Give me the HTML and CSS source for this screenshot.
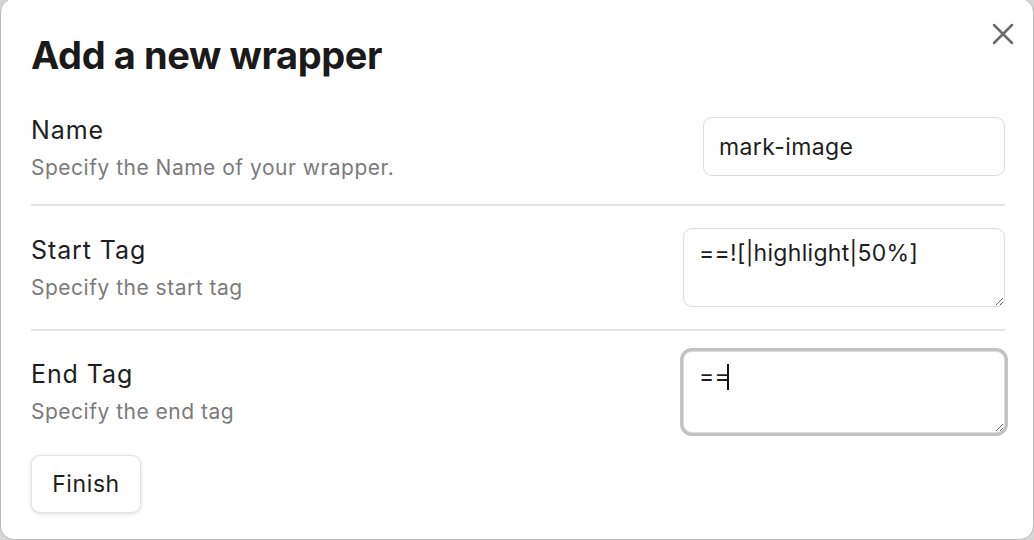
FILE: index.html
```html
<!DOCTYPE html>
<html>
<head>
<meta charset="utf-8">
<link rel="stylesheet" href="styles.css">
</head>
<body>
<div class="modal">
  <button class="close" aria-label="Close">
    <svg width="22" height="22" viewBox="0 0 22 22"><path d="M2 2 L20 20 M20 2 L2 20" stroke="#6b6b6b" stroke-width="2.5" stroke-linecap="round"/></svg>
  </button>
  <h1 class="title">Add a new wrapper</h1>
  <div class="setting first">
    <div class="info">
      <div class="name">Name</div>
      <div class="desc">Specify the Name of your wrapper.</div>
    </div>
    <input class="text-input" type="text" value="mark-image">
  </div>
  <div class="setting bordered">
    <div class="info">
      <div class="name">Start Tag</div>
      <div class="desc">Specify the start tag</div>
    </div>
    <textarea class="area">==![|highlight|50%]</textarea>
  </div>
  <div class="setting bordered last">
    <div class="info">
      <div class="name">End Tag</div>
      <div class="desc">Specify the end tag</div>
    </div>
    <div class="area focused" role="textbox">==<span class="caret"></span></div>
  </div>
  <div class="actions">
    <button class="btn">Finish</button>
  </div>
</div>
</body>
</html>
```
FILE: styles.css
```css
html, body {
  margin: 0;
  padding: 0;
}
body {
  background: #d6d6d6;
  font-family: Inter, "Noto Sans", sans-serif;
  color: #222;
  overflow: hidden;
}
.modal {
  position: relative;
  box-sizing: border-box;
  width: 1034px;
  height: 542px;
  margin-top: -2px;
  background: #fff;
  border: 1px solid #b9b9b9;
  border-radius: 14px;
  padding: 0 28px 0 30px;
}
.close {
  position: absolute;
  top: 24px;
  right: 19px;
  background: none;
  border: 0;
  padding: 0;
  width: 22px;
  height: 22px;
  cursor: pointer;
}
.close svg { display: block; }
.title {
  margin: 0 0 15px;
  padding-top: 34px;
  font-size: 38px;
  line-height: 44px;
  font-weight: 700;
  letter-spacing: -0.4px;
  color: #1a1a1a;
}
.setting {
  display: flex;
  align-items: center;
  justify-content: space-between;
  padding: 22px 0;
}
.bordered { border-top: 2px solid #e4e4e4; }
.last { padding-top: 20px; padding-bottom: 22px; }
.info {
  display: flex;
  flex-direction: column;
  gap: 8px;
}
.name {
  font-size: 25px;
  line-height: 32px;
  letter-spacing: 0.9px;
  color: #1e1e1e;
}
.desc {
  font-size: 21px;
  line-height: 28px;
  letter-spacing: 0.5px;
  color: #7b7b7b;
}
.text-input {
  box-sizing: border-box;
  width: 302px;
  height: 59px;
  margin-bottom: 3px;
  border: 1px solid #dcdcdc;
  border-radius: 9px;
  padding: 0 15px;
  font-family: inherit;
  font-size: 23px;
  letter-spacing: 0.4px;
  color: #1e1e1e;
  outline: none;
}
.area {
  box-sizing: border-box;
  width: 322px;
  height: 79px;
  border: 1px solid #dcdcdc;
  border-radius: 9px;
  padding: 10px 15px;
  font-family: inherit;
  font-size: 23px;
  line-height: 28px;
  letter-spacing: 0.3px;
  color: #1e1e1e;
  resize: vertical;
  overflow: auto;
  outline: none;
  background: #fff;
}
.focused {
  height: 82px;
  box-shadow: 0 0 0 3px #c2c2c2;
}
.caret {
  display: inline-block;
  width: 2px;
  height: 26px;
  background: #111;
  vertical-align: -6px;
  margin-left: -3px;
}
.actions {
  display: flex;
}
.btn {
  box-sizing: border-box;
  width: 110px;
  height: 58px;
  background: #fff;
  border: 1px solid #e2e2e2;
  border-radius: 9px;
  box-shadow: 0 1px 4px rgba(0,0,0,0.14);
  font-family: inherit;
  font-size: 23px;
  letter-spacing: 0.6px;
  color: #1e1e1e;
  padding: 0;
}
```
